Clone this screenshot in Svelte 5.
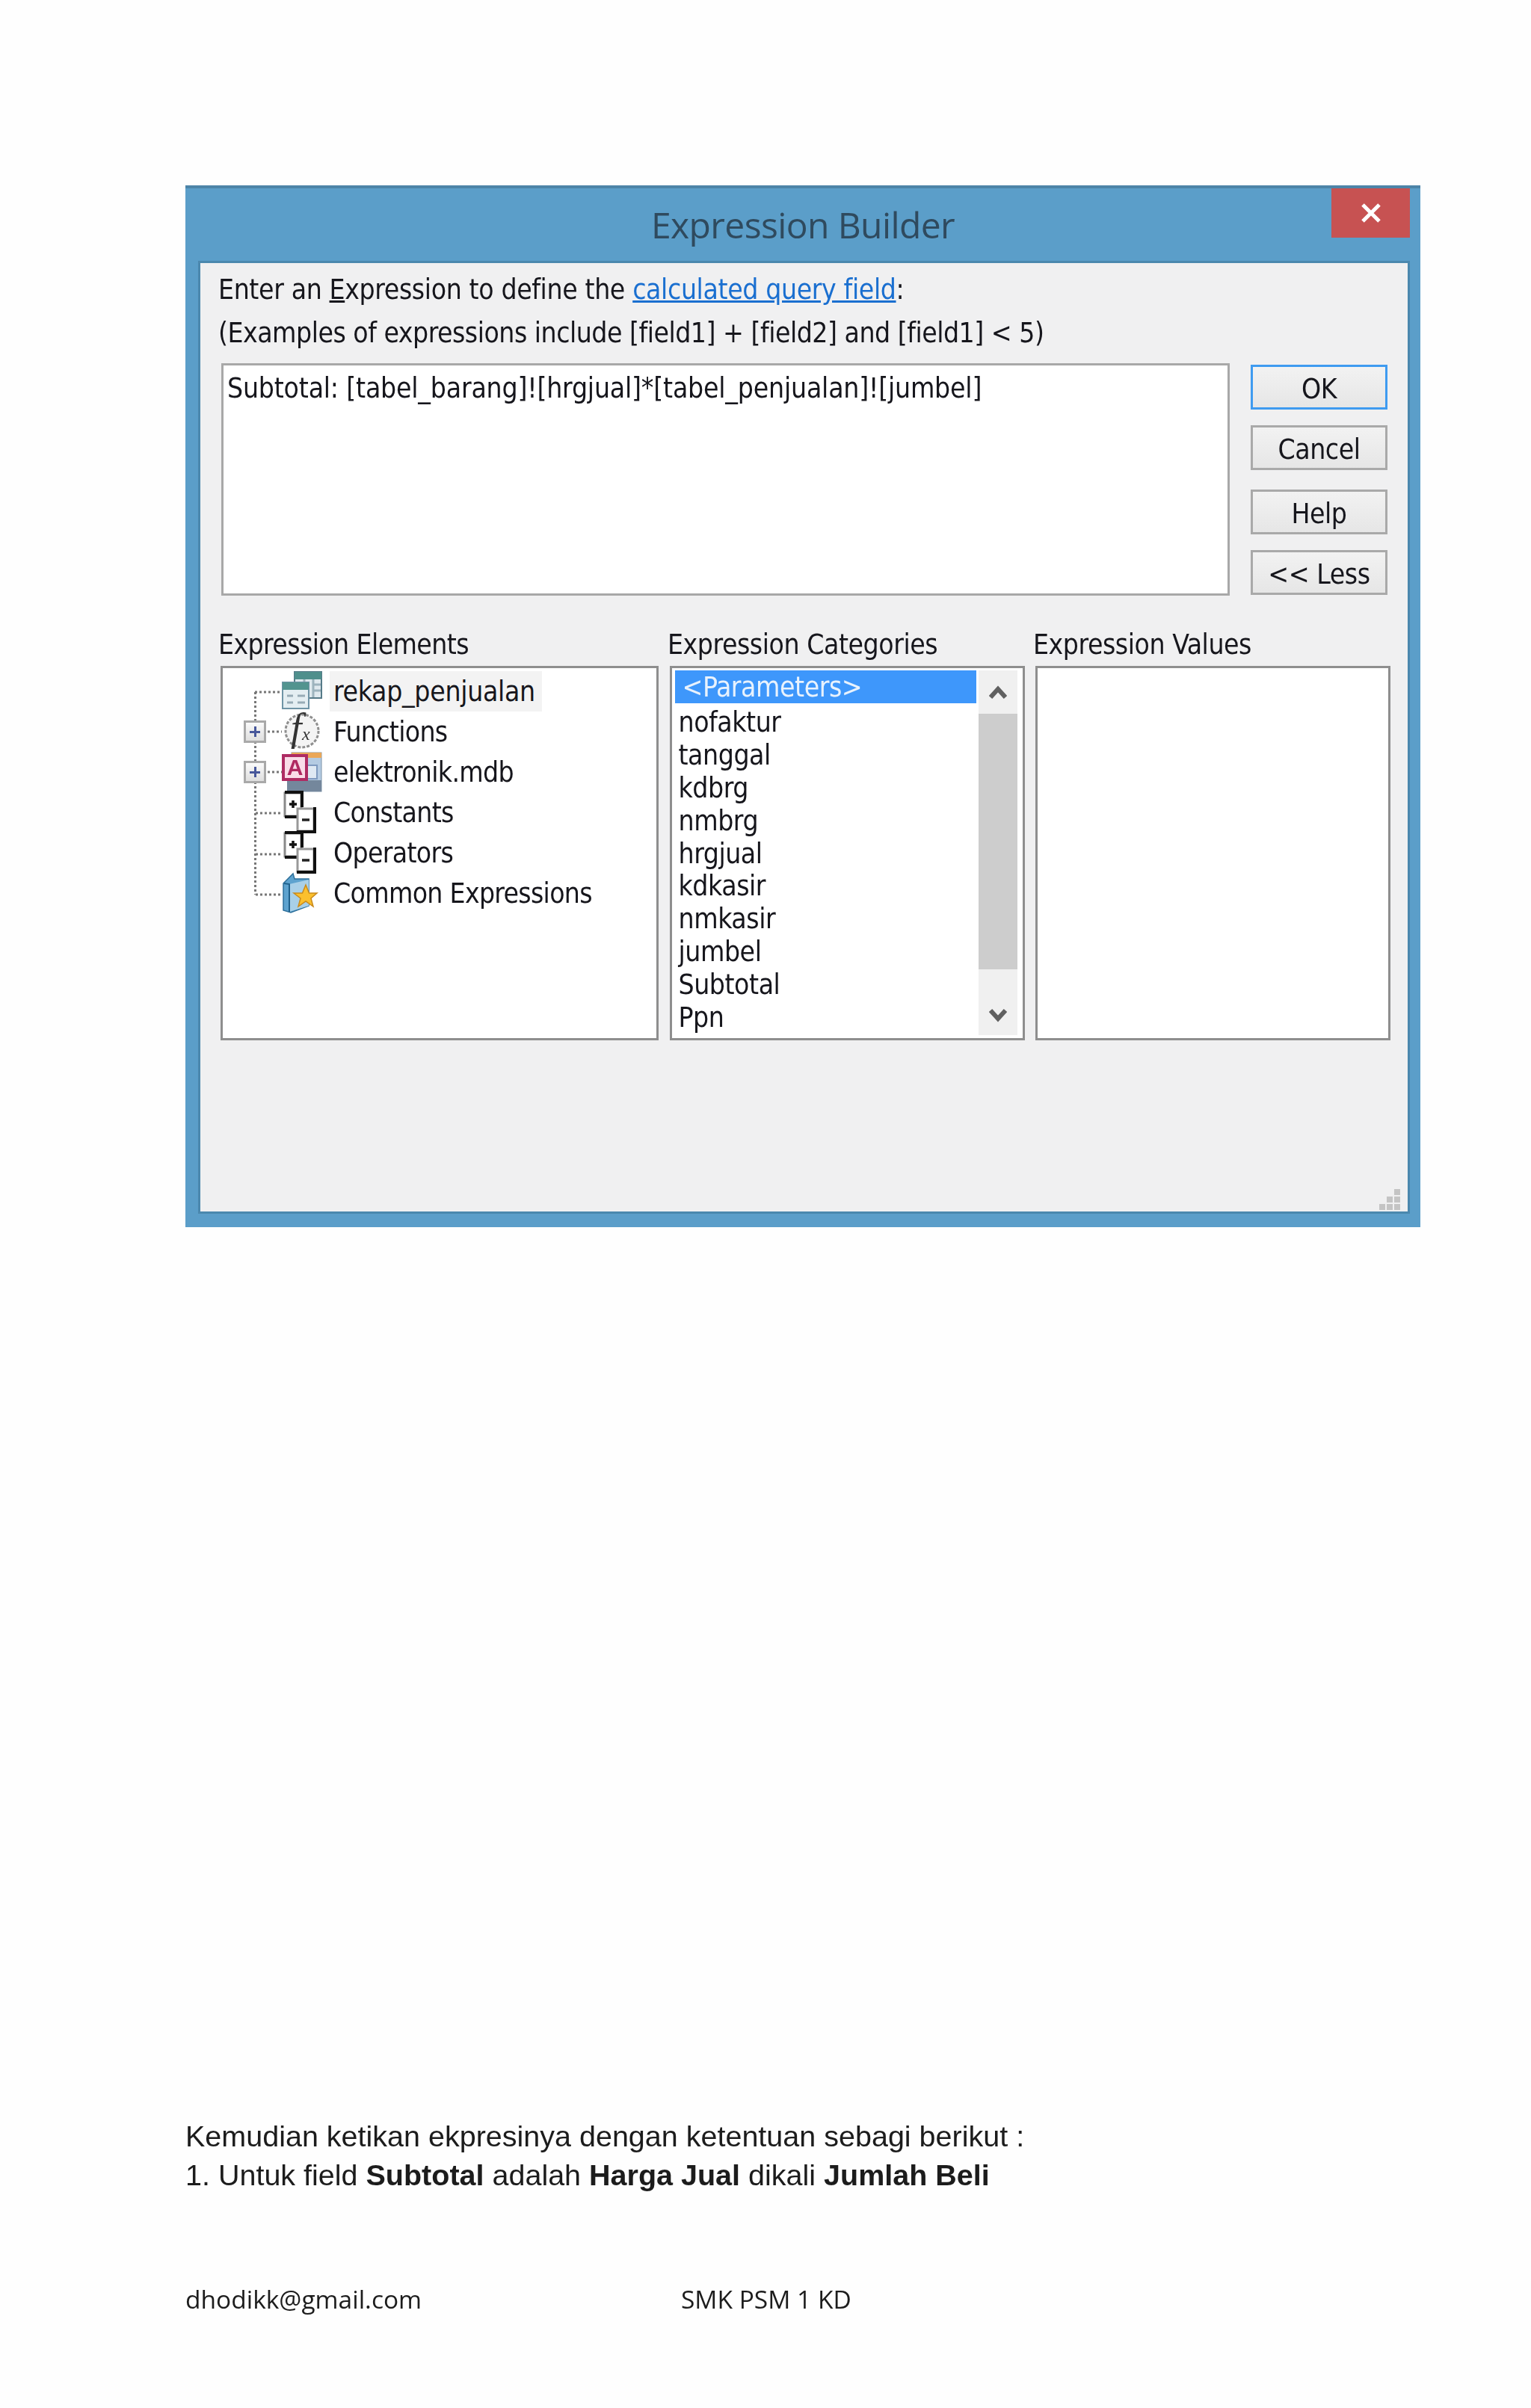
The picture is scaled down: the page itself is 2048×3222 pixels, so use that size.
<script>
  const treeRows = [
    { icon: 'table', label: 'rekap_penjualan', selected: true },
    { icon: 'fx', label: 'Functions', expand: true },
    { icon: 'db', label: 'elektronik.mdb', expand: true },
    { icon: 'ops', label: 'Constants' },
    { icon: 'ops', label: 'Operators' },
    { icon: 'book', label: 'Common Expressions' }
  ];
  const categories = ['nofaktur', 'tanggal', 'kdbrg', 'nmbrg', 'hrgjual', 'kdkasir', 'nmkasir', 'jumbel', 'Subtotal', 'Ppn'];
</script>

{#snippet opsIcon()}
  <rect x="4" y="1" width="22" height="31" fill="#fff" stroke="#8a8a8a" stroke-width="3" />
  <path d="M4 0H27V20M4 33H20" fill="none" stroke="#111" stroke-width="4" />
  <path d="M10 16H20M15 11V21" stroke="#111" stroke-width="3.500" />
  <rect x="21" y="22" width="22" height="30" fill="#fff" stroke="#999" stroke-width="3" />
  <path d="M44 20V53H20" fill="none" stroke="#111" stroke-width="4" />
  <path d="M27 37H37" stroke="#222" stroke-width="3.500" />
{/snippet}

{#snippet tableIcon()}
  <rect x="17" y="1" width="36" height="35" fill="#dfe9ee" stroke="#567a88" stroke-width="2" />
  <rect x="17" y="1" width="36" height="10" fill="#4f8f8c" />
  <path d="M30 11V35M42 11V35M43 18H52M43 26H52" stroke="#9db3bd" stroke-width="3" />
  <rect x="1" y="15" width="35" height="35" fill="#e4eef2" stroke="#6f94a6" stroke-width="2" />
  <rect x="1" y="15" width="35" height="10" fill="#52948f" />
  <path d="M7 33H15M7 42H15M21 33H31M21 42H31" stroke="#97abb6" stroke-width="3" />
{/snippet}

{#snippet fxIcon()}
  <circle cx="27" cy="26" r="22" fill="#f4f4f4" stroke="#8f8f8f" stroke-width="3" stroke-dasharray="4 2" />
  <text x="12" y="39" class="fx">f</text>
  <text x="27" y="38" class="fx small">x</text>
{/snippet}

{#snippet dbIcon()}
  <rect x="13" y="1" width="40" height="52" fill="#b4cbe2" stroke="#7d93a8" stroke-width="1" />
  <rect x="13" y="1" width="40" height="7" fill="#eaa758" />
  <rect x="30" y="18" width="17" height="18" fill="#dfe9f3" stroke="#7f9bc0" stroke-width="2" />
  <rect x="7" y="38" width="46" height="15" fill="#74879c" />
  <rect x="2" y="5" width="31" height="32" fill="#f9dce8" stroke="#ae2b63" stroke-width="4" />
  <text x="17.500" y="31" class="access">A</text>
{/snippet}

{#snippet bookIcon()}
  <path d="M2 14L15 1L17 8L36 8V44L12 53L2 50Z" fill="#5ea3cf" stroke="#2d6f9a" stroke-width="1.500" />
  <path d="M10 15L36 9V44L10 52Z" fill="#a9d0e8" />
  <path d="M3 14L10 15V52" fill="none" stroke="#1f618c" stroke-width="2" />
  <path d="M32 16L36.500 27H47L39 34L42 45L32 38L22 45L25 34L16 27H27.500Z" fill="#fbc02d" stroke="#c98a1c" stroke-width="1.500" />
{/snippet}

<div class="page">
  <section class="dialog">
    <header class="titlebar">
      <h1>Expression Builder</h1>
      <div class="close">
        <svg width="30" height="26" viewBox="0 0 30 26"><path d="M4 2L26 24M26 2L4 24" stroke="#fff" stroke-width="5" /></svg>
      </div>
    </header>

    <div class="panel">
      <div class="intro">
        <p class="first">Enter an <u>E</u>xpression to define the <a href="#top">calculated query field</a>:</p>
        <p class="second">(Examples of expressions include [field1] + [field2] and [field1] &lt; 5)</p>
      </div>

      <div class="top-row">
        <div class="expr">Subtotal: [tabel_barang]![hrgjual]*[tabel_penjualan]![jumbel]</div>
        <div class="buttons">
          <button class="primary">OK</button>
          <button>Cancel</button>
          <button class="help">Help</button>
          <button>&lt;&lt; Less</button>
        </div>
      </div>

      <div class="lists">
        <div class="col">
          <div class="label">Expression Elements</div>
          <div class="box tree">
            <svg class="guides" width="60" height="300" viewBox="0 0 60 300">
              <path d="M43.500 32V303" fill="none" stroke="#777" stroke-width="3" stroke-dasharray="3 3" />
              <path d="M43 32H79M60 85H79M60 139H79M44 194H79M44 249H79M44 303H79" fill="none" stroke="#777" stroke-width="3" stroke-dasharray="3 3" />
            </svg>
            {#each treeRows as row}
              <div class="tree-row">
                <span class="expander">
                  {#if row.expand}<span class="plus"></span>{/if}
                </span>
                <svg class="icon" width="54" height="54" viewBox="0 0 54 54">
                  {#if row.icon === 'table'}
                    {@render tableIcon()}
                  {:else if row.icon === 'fx'}
                    {@render fxIcon()}
                  {:else if row.icon === 'db'}
                    {@render dbIcon()}
                  {:else if row.icon === 'ops'}
                    {@render opsIcon()}
                  {:else}
                    {@render bookIcon()}
                  {/if}
                </svg>
                <span class="tree-label" class:selected={row.selected}>{row.label}</span>
              </div>
            {/each}
          </div>
        </div>

        <div class="col">
          <div class="label">Expression Categories</div>
          <div class="box cats">
            <div class="cat-items">
              <div class="cat active">&lt;Parameters&gt;</div>
              {#each categories as c}
                <div class="cat">{c}</div>
              {/each}
            </div>
            <div class="scroll">
              <svg class="arrow" width="24" height="20" viewBox="0 0 24 20"><path d="M2 17L12 6L22 17" fill="none" stroke="#606060" stroke-width="6" /></svg>
              <div class="thumb"></div>
              <svg class="arrow" width="24" height="20" viewBox="0 0 24 20"><path d="M2 3L12 14L22 3" fill="none" stroke="#606060" stroke-width="6" /></svg>
            </div>
          </div>
        </div>

        <div class="col">
          <div class="label">Expression Values</div>
          <div class="box values"></div>
        </div>
      </div>

      <div class="grip">
        <i></i><i></i><i></i><i></i><i></i><i></i>
      </div>
    </div>
  </section>

  <div class="body-text">
    <p>Kemudian ketikan ekpresinya dengan ketentuan sebagi berikut :</p>
    <p>1. Untuk field <b>Subtotal</b> adalah <b>Harga Jual</b> dikali <b>Jumlah Beli</b></p>
  </div>

  <footer class="foot">
    <span>dhodikk@gmail.com</span>
    <span>SMK PSM 1 KD</span>
  </footer>
</div>

<style>
  :global(body) {
    margin: 0;
    background: #fefefe;
  }

  .page {
    height: 3222px;
    box-sizing: border-box;
    padding: 248px 0 0 248px;
    overflow: hidden;
  }

  .dialog {
    width: 1652px;
    height: 1394px;
    box-sizing: border-box;
    background: #5b9ec9;
    border-top: 4px solid #4d84a8;
    display: flex;
    flex-direction: column;
    font-family: "DejaVu Sans", sans-serif;
    font-stretch: condensed;
    color: #16161c;
  }

  .titlebar {
    height: 100px;
    flex: none;
    position: relative;
    display: flex;
    align-items: center;
    justify-content: center;
  }

  h1 {
    margin: 0 0 4px;
    font-family: "Open Sans", sans-serif;
    font-stretch: normal;
    font-weight: 400;
    font-size: 48px;
    letter-spacing: -0.6px;
    color: #2f4a5e;
    filter: blur(0.6px);
  }

  .close {
    position: absolute;
    top: 0;
    right: 14px;
    width: 105px;
    height: 66px;
    background: #c75252;
    display: flex;
    align-items: center;
    justify-content: center;
  }

  .panel {
    flex: 1;
    margin: 0 17px 21px 20px;
    background: #f0f0f1;
    box-shadow: 0 0 0 3px #4b88ae;
    position: relative;
    font-size: 37px;
    letter-spacing: -0.45px;
    filter: blur(0.5px);
  }

  .intro {
    padding: 14px 0 0 24px;
    height: 134px;
    box-sizing: border-box;
  }

  .intro p {
    margin: 0;
    line-height: 44px;
    white-space: nowrap;
  }

  .intro .first {
    letter-spacing: -0.38px;
  }

  .intro .second {
    margin-top: 14px;
    letter-spacing: -0.5px;
  }

  .intro a {
    color: #1a6fd0;
  }

  .top-row {
    display: flex;
    padding-left: 28px;
    gap: 28px;
  }

  .expr {
    width: 1349px;
    height: 311px;
    box-sizing: border-box;
    background: #fff;
    border: 3px solid #a8a8a8;
    padding: 9px 5px;
    line-height: 44px;
    letter-spacing: -0.2px;
    white-space: nowrap;
  }

  .buttons {
    width: 183px;
    padding-top: 2px;
    display: flex;
    flex-direction: column;
    gap: 21px;
  }

  button {
    height: 60px;
    box-sizing: border-box;
    border: 3px solid #a9a9a9;
    background: linear-gradient(#f2f2f2, #e6e6e6);
    font: inherit;
    font-stretch: condensed;
    letter-spacing: -0.45px;
    color: inherit;
    padding: 4px 0 0;
  }

  .primary {
    border-color: #3f9bf0;
  }

  .help {
    margin-top: 5px;
  }

  .lists {
    display: flex;
    margin-top: 22px;
    padding-left: 24px;
  }

  .col {
    display: flex;
    flex-direction: column;
  }

  .col:nth-child(1) { width: 601px; }
  .col:nth-child(2) { width: 489px; }
  .col:nth-child(3) { width: 477px; }

  .label {
    height: 72px;
    line-height: 44px;
    padding-top: 22px;
    box-sizing: border-box;
    white-space: nowrap;
  }

  .col:nth-child(1) .label {
    letter-spacing: -0.6px;
  }

  .box {
    height: 501px;
    box-sizing: border-box;
    background: #fff;
    border: 3px solid #8e8e8e;
  }

  .tree {
    width: 586px;
    margin-left: 3px;
    padding-top: 4px;
    position: relative;
    letter-spacing: -0.7px;
  }

  .guides {
    position: absolute;
    left: 0;
    top: 0;
    overflow: visible;
  }

  .tree-row {
    height: 54px;
    display: flex;
    align-items: center;
    position: relative;
  }

  .expander {
    width: 79px;
    flex: none;
    display: flex;
    padding-left: 28px;
    box-sizing: border-box;
  }

  .plus {
    width: 30px;
    height: 30px;
    box-sizing: border-box;
    border: 3px solid #a9a9a9;
    background: linear-gradient(#fafafa, #dfdfdf);
    position: relative;
  }

  .plus::before,
  .plus::after {
    content: "";
    position: absolute;
    background: #47579a;
  }

  .plus::before { left: 5px; right: 5px; top: 11px; height: 3px; }
  .plus::after { top: 5px; bottom: 5px; left: 11px; width: 3px; }

  .icon {
    flex: none;
    overflow: visible;
  }

  .fx {
    font-family: "Liberation Serif", serif;
    font-style: italic;
    font-size: 52px;
    fill: #333;
    letter-spacing: 0;
  }

  .fx.small {
    font-size: 24px;
  }

  .access {
    font-family: "Liberation Sans", sans-serif;
    font-weight: 700;
    font-size: 30px;
    fill: #b02a62;
    text-anchor: middle;
    letter-spacing: 0;
  }

  .tree-label {
    margin-left: 10px;
    height: 54px;
    line-height: 56px;
    padding: 0 5px;
    white-space: nowrap;
  }

  .tree-label.selected {
    background: #f3f3f3;
    padding-right: 9px;
    letter-spacing: -0.3px;
  }

  .cats {
    width: 475px;
    margin-left: 3px;
    display: flex;
    padding: 3px 7px 4px 3.500px;
    overflow: hidden;
  }

  .cat-items {
    width: 403.500px;
    flex: none;
  }

  .cat {
    height: 43.900px;
    line-height: 52px;
    padding-left: 5px;
    white-space: nowrap;
  }

  .cat.active {
    height: 44px;
    line-height: 46px;
    padding-left: 10px;
    background: #3e97fb;
    color: #e8f2fd;
  }

  .scroll {
    width: 52px;
    margin-left: 3px;
    background: #f0f0f0;
    display: flex;
    flex-direction: column;
    align-items: center;
  }

  .arrow {
    height: 58px;
    flex: none;
  }

  .thumb {
    width: 100%;
    height: 342px;
    flex: none;
    background: #cdcdcd;
    margin-bottom: 33px;
  }

  .values {
    width: 475px;
    margin-left: 3px;
  }

  .grip {
    position: absolute;
    right: 10px;
    bottom: 0;
    width: 28px;
    height: 30px;
    display: grid;
    grid-template-columns: repeat(3, 8px);
    grid-template-rows: repeat(3, 8px);
    gap: 2px;
  }

  .grip i {
    background: #c4c4c4;
  }

  .grip i:nth-child(1) { grid-area: 1 / 3; }
  .grip i:nth-child(2) { grid-area: 2 / 2; }
  .grip i:nth-child(3) { grid-area: 2 / 3; }
  .grip i:nth-child(4) { grid-area: 3 / 1; }
  .grip i:nth-child(5) { grid-area: 3 / 2; }
  .grip i:nth-child(6) { grid-area: 3 / 3; }

  .body-text {
    margin-top: 1190px;
    font-family: "Liberation Sans", sans-serif;
    font-size: 39.500px;
    color: #1c1c1c;
    filter: blur(0.4px);
  }

  .body-text p {
    margin: 0;
    line-height: 52px;
    white-space: nowrap;
  }

  .foot {
    margin-top: 118px;
    display: flex;
    font-family: "Open Sans", sans-serif;
    font-size: 33.500px;
    line-height: 44px;
    color: #1c1c1c;
    filter: blur(0.4px);
  }

  .foot span:first-child {
    width: 663px;
  }
</style>
